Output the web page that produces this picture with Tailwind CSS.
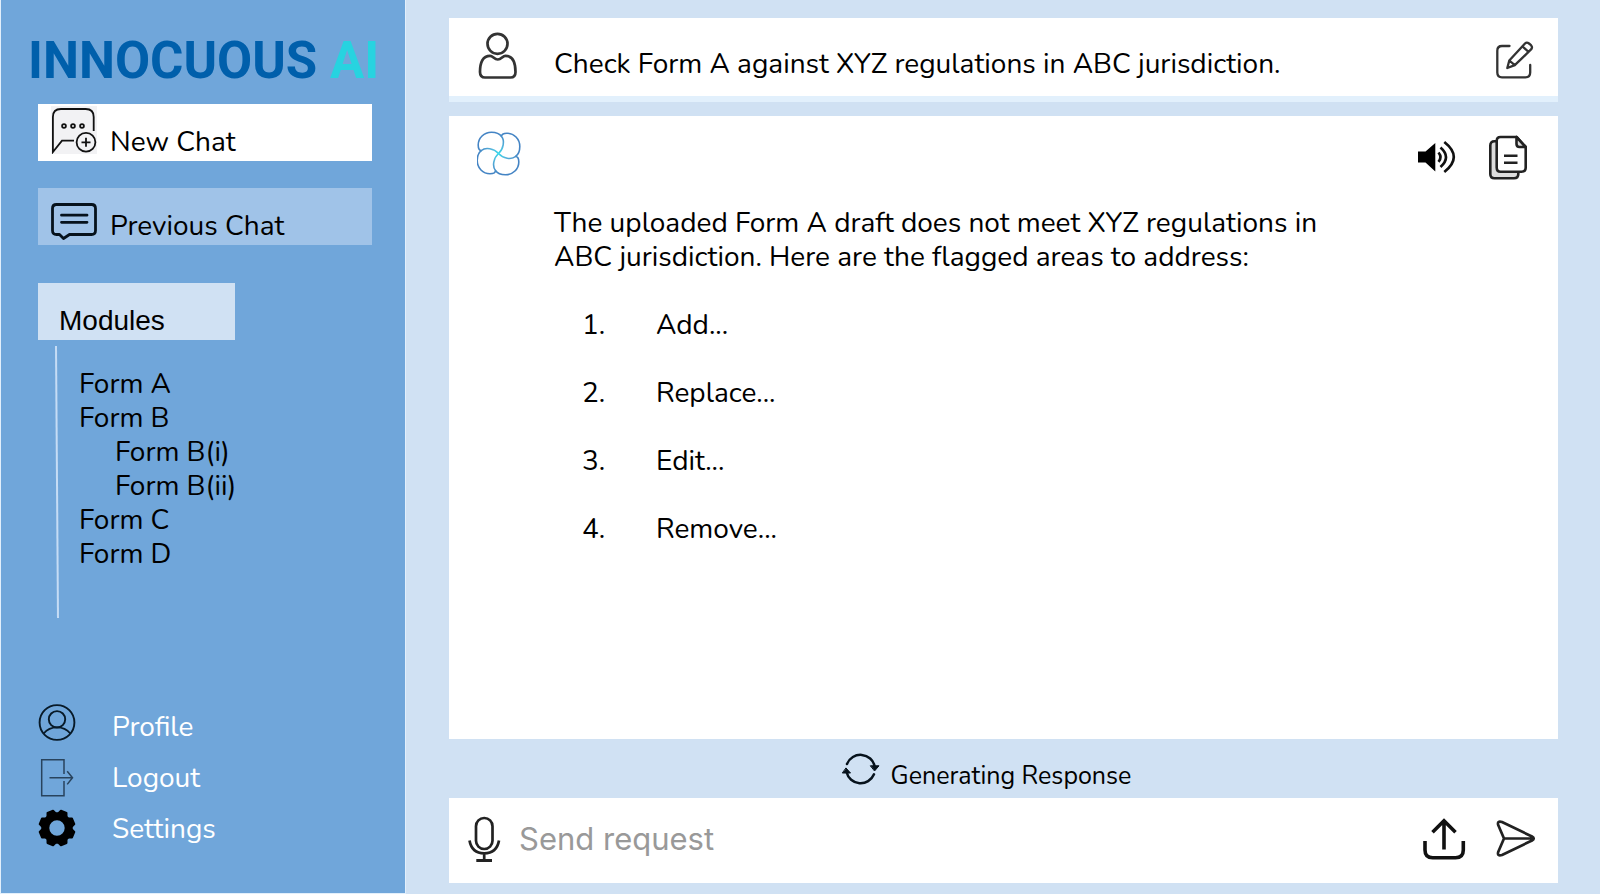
<!DOCTYPE html>
<html lang="en">
<head>
<meta charset="utf-8">
<meta name="viewport" content="width=device-width, initial-scale=1">
<title>Innocuous AI</title>
<script src="https://cdn.jsdelivr.net/npm/@tailwindcss/browser@4"></script>
</head>
<body class="flex min-h-screen bg-[#d0e1f3] font-['Nunito','Open_Sans',sans-serif] text-[28px] leading-[34px] text-black">
<aside class="flex w-[406px] shrink-0 flex-col border-x border-b border-[#e2effb] bg-[#70a6da] pb-[39px]">
  <h1 class="pt-[31px] pl-[27px] font-['Roboto',sans-serif] text-[51px] leading-[60px] font-bold whitespace-nowrap text-[#005fab]">INNOCUOUS <span class="text-[#27d3e0]">AI</span></h1>
  <div class="mt-[13px] mr-[33px] ml-[37px] flex flex-col gap-[27px]">
    <button type="button" class="flex h-[57px] items-start gap-[13px] bg-white pt-[2px] pl-[13px]">
      <svg class="h-12 w-[46px] shrink-0 bg-[#f2f2f4]" viewBox="0 0 46 48" fill="none" stroke="#111" stroke-width="1.8" aria-hidden="true"><path d="M23 34.7H11L1.9 46V11q0-8 8-8H34.7q8 0 8 8V25"/><circle cx="35" cy="36.3" r="9.4"/><path d="M30.5 36.3h9M35 31.8v9"/><circle cx="13" cy="20" r="1.9"/><circle cx="22" cy="20" r="1.9"/><circle cx="31" cy="20" r="1.9"/></svg>
      <span class="pt-[19px]">New Chat</span>
    </button>
    <button type="button" class="flex h-[57px] items-start gap-[13px] bg-[#a0c3e8] pt-[2px] pl-[13px]">
      <svg class="h-[51px] w-[46px] shrink-0" viewBox="0 0 46 51" fill="none" stroke="#06121c" stroke-width="2.8" stroke-linecap="round" stroke-linejoin="round" aria-hidden="true"><path d="M5.5 14.5h35q4 0 4 4v22q0 4-4 4H18.5L12.5 48.5 8.5 44.5H5.5q-4 0-4-4v-22q0-4 4-4zM10.5 25.2h25.5M10.5 32.3h25.5"/></svg>
      <span class="pt-[19px]">Previous Chat</span>
    </button>
  </div>
  <h2 class="mt-[38px] ml-[37px] h-[57px] w-[197px] bg-[#d0e1f3] pt-[21px] pl-[21px] font-['Liberation_Sans',sans-serif]">Modules</h2>
  <nav aria-label="Modules" class="mt-[6px] ml-[54px] flex">
    <svg class="h-[272px] w-1 shrink-0" viewBox="0 0 4 272" aria-hidden="true"><path d="M1 0L3 272" stroke="#c5dcf5" stroke-width="2"/></svg>
    <ul class="pt-[21px] pl-5">
      <li><a class="block" href="#form-a">Form A</a></li>
      <li><a class="block" href="#form-b">Form B</a>
        <ul class="pl-9"><li><a class="block" href="#form-b-i">Form B(i)</a></li><li><a class="block" href="#form-b-ii">Form B(ii)</a></li></ul>
      </li>
      <li><a class="block" href="#form-c">Form C</a></li>
      <li><a class="block" href="#form-d">Form D</a></li>
    </ul>
  </nav>
  <nav aria-label="Account" class="mt-auto ml-[37px] flex flex-col text-white">
    <a href="#profile" class="flex h-[51px] items-center gap-9">
      <svg class="h-[51px] w-[38px]" viewBox="0 0 38 51" fill="none" stroke="#081a28" stroke-width="1.9" aria-hidden="true"><circle cx="19" cy="21.5" r="17.4"/><circle cx="19" cy="18.3" r="8.2"/><path d="M5.6 32.5C9 28.5 13.5 26.4 19 26.4S29 28.5 32.4 32.5"/></svg>
      Profile</a>
    <a href="#logout" class="flex h-[51px] items-center gap-9">
      <svg class="h-[51px] w-[38px]" viewBox="0 0 38 51" fill="none" stroke="#28435d" stroke-width="1.5" aria-hidden="true"><path d="M26 22V7.7H3.7V43.8H26V29M11.5 25.8H34.5M29.2 19.2L34.5 25.8 29.2 32.4"/></svg>
      Logout</a>
    <a href="#settings" class="flex h-[51px] items-center gap-9">
      <svg class="h-[51px] w-[38px]" viewBox="0 0 38 51" aria-hidden="true"><circle cx="19" cy="25" r="11.7" fill="none" stroke="#000" stroke-width="8"/><g stroke="#000" stroke-width="2" stroke-linejoin="round"><path id="tooth" d="M14.5 11L16 7.500H22L23.500 11z" transform="rotate(22.5 19 25)"/><use href="#tooth" transform="rotate(45 19 25)"/><use href="#tooth" transform="rotate(90 19 25)"/><use href="#tooth" transform="rotate(135 19 25)"/><use href="#tooth" transform="rotate(180 19 25)"/><use href="#tooth" transform="rotate(225 19 25)"/><use href="#tooth" transform="rotate(270 19 25)"/><use href="#tooth" transform="rotate(315 19 25)"/></g></svg>
      Settings</a>
  </nav>
</aside>

<main class="flex min-w-0 flex-1 flex-col pt-[18px] pr-[42px] pb-[11px] pl-[43px]">
  <section class="flex min-h-[84px] items-start border-b-6 border-[#e2f0fc] bg-white pr-[22px] pl-7">
    <svg class="mt-[14px] h-12 w-[42px] shrink-0" viewBox="0 0 42 48" fill="none" stroke="#333" stroke-width="2.7" aria-hidden="true"><circle cx="20.5" cy="11.8" r="10"/><path d="M13 23.8C6 23.8 3 30 3 40q0 5.500 5 5.500h25.500q5 0 5-5.500C38.500 30 35.500 23.800 28.500 23.800c-3 0-4 3.700-7.700 3.700s-4.800-3.700-7.800-3.700z"/></svg>
    <p class="min-w-0 flex-1 pt-[29px] pl-[35px]">Check Form A against XYZ regulations in ABC jurisdiction.</p>
    <button type="button" aria-label="Edit request" class="mt-[22px]">
      <svg class="h-10 w-[42px]" viewBox="0 0 42 40" fill="none" stroke="#333" stroke-width="2.3" stroke-linejoin="round" stroke-linecap="round" aria-hidden="true"><path d="M15.500 6H8q-4.700 0-4.700 4.700V32.500q0 4.800 4.700 4.800H31.500q4.700 0 4.700-4.800V25"/><path d="M13.300 28L15.300 20.500 31 3.500q1.800-1.700 4 0l2 1.700q1.800 2 .3 4L20.800 25.200zM28.500 6.500l6 5.300M15.300 20.500l5.500 4.700"/></svg>
    </button>
  </section>

  <section class="mt-[14px] flex-1 bg-white pb-9">
    <div class="flex items-start pr-[30px] pl-7">
      <svg class="mt-[15px] h-[45px] w-11" viewBox="0 0 44 45" fill="none" aria-hidden="true"><defs><radialGradient id="petal" gradientUnits="userSpaceOnUse" cx="21.5" cy="22.5" r="20"><stop offset="0" stop-color="#35d8ea"/><stop offset=".4" stop-color="#55b5dc"/><stop offset="1" stop-color="#4484c4"/></radialGradient></defs><g stroke="url(#petal)" stroke-width="1.6"><path id="leaf" d="M21.5 22.5C26.500 18 28 9.500 24.500 5.500C22.500 2.500 18.500 1.200 14.500 1.200C7 1.200 1.200 7 1.200 14C1.200 17 2.500 19.500 4.500 19.500"/><use href="#leaf" transform="rotate(90 21.5 22.5)"/><use href="#leaf" transform="rotate(180 21.5 22.5)"/><use href="#leaf" transform="rotate(270 21.5 22.5)"/></g></svg>
      <div class="ml-auto flex items-start gap-[31px] pt-[19px]">
        <button type="button" aria-label="Read aloud" class="pt-[5px]">
          <svg class="h-[34px] w-10" viewBox="0 0 40 34" fill="none" stroke="#111" stroke-width="2.7" aria-hidden="true"><path fill="#000" stroke="none" d="M1 11.500H8.500L18.300 3V31.500L8.500 22.500H1z"/><path d="M21.500 12.500q4 4.700 0 9.300M23.500 7.500q11 9.700 0 19.400M27.300 2q19 15 0 30"/></svg>
        </button>
        <button type="button" aria-label="Copy response">
          <svg class="h-[46px] w-10" viewBox="0 0 40 46" stroke="#222" stroke-width="2.600" stroke-linejoin="round" aria-hidden="true"><path fill="#ddd" d="M8.500 6.300H6.500Q2.300 6.300 2.300 10.500V39Q2.300 43.300 6.500 43.300H26Q30.300 43.300 30.300 39V36"/><path fill="#fff" d="M12.500 2H28.500L37.700 12V32.500Q37.700 36.700 33.500 36.700H12.500Q8.700 36.700 8.700 32.500V6Q8.700 2 12.500 2z"/><path fill="#ddd" d="M28.500 2V9Q28.500 12 31.500 12H37.700z"/><path d="M16 20.700H29.500M16 27.800H29.500"/></svg>
        </button>
      </div>
    </div>
    <div class="mr-[200px] ml-[105px] pt-[25px]">
      <p>The uploaded Form A draft does not meet XYZ regulations in<br>ABC jurisdiction. Here are the flagged areas to address:</p>
      <ol class="mt-[34px] flex flex-col gap-[34px] pl-7">
        <li class="flex"><span class="w-[74px]">1.</span>Add...</li>
        <li class="flex"><span class="w-[74px]">2.</span>Replace...</li>
        <li class="flex"><span class="w-[74px]">3.</span>Edit...</li>
        <li class="flex"><span class="w-[74px]">4.</span>Remove...</li>
      </ol>
    </div>
  </section>

  <div role="status" class="flex h-[59px] items-start justify-center gap-[11px] pr-[34px] pt-[13px] text-[25px]">
    <svg class="h-[34px] w-[38px]" viewBox="0 0 38 34" fill="none" stroke="#06121c" stroke-width="2.5" stroke-linecap="round" aria-hidden="true"><path d="M5 12A14.500 14.500 0 0 1 32.700 14.500M32 22.300A14.500 14.500 0 0 1 4.500 20"/><path fill="#06121c" stroke-width="1" stroke-linejoin="round" d="M28.700 13.800H37L32.800 18.700zM.7 21H8.500L4.200 16.200z"/></svg>
    <span class="pt-[7px]">Generating Response</span>
  </div>

  <form class="flex h-[85px] items-center bg-white pr-[21px] pb-1 pl-[18px]" onsubmit="return false">
    <button type="button" aria-label="Dictate">
      <svg class="h-12 w-[35px]" viewBox="0 0 35 48" fill="none" stroke="#222" stroke-width="2.7" aria-hidden="true"><rect x="9" y="3" width="16.500" height="31" rx="8.200"/><path d="M2.500 25.500C4 34 9.500 38.300 17.200 38.300S30.500 34 32 25.500M17.200 38.300V45"/><path stroke-width="3" d="M9.300 45.500H25"/></svg>
    </button>
    <input type="text" aria-label="Send request" placeholder="Send request" class="ml-[17px] h-12 min-w-0 flex-1 font-['Inter',sans-serif] text-[31px] outline-none placeholder:text-[#999]">
    <button type="button" aria-label="Upload file" class="mr-[29px]">
      <svg class="h-11 w-11" viewBox="0 0 44 44" fill="none" stroke="#111" stroke-width="3.600" aria-hidden="true"><path d="M3 24V33Q3 40.700 10.700 40.700H33.500Q41.300 40.700 41.300 33V24M22 32.500V4M10.500 15.300L22 3.800 33.500 15.300"/></svg>
    </button>
    <button type="submit" aria-label="Send">
      <svg class="h-10 w-[42px]" viewBox="0 0 42 40" fill="none" stroke="#222" stroke-width="2.700" stroke-linejoin="round" aria-hidden="true"><path d="M7 3L37 17.500Q40.500 19.500 37 21.500L7 36Q2 37.500 3.200 33L9 19.500 3.200 6Q2 1.500 7 3zM9 19.500H38"/></svg>
    </button>
  </form>
</main>
</body>
</html>
